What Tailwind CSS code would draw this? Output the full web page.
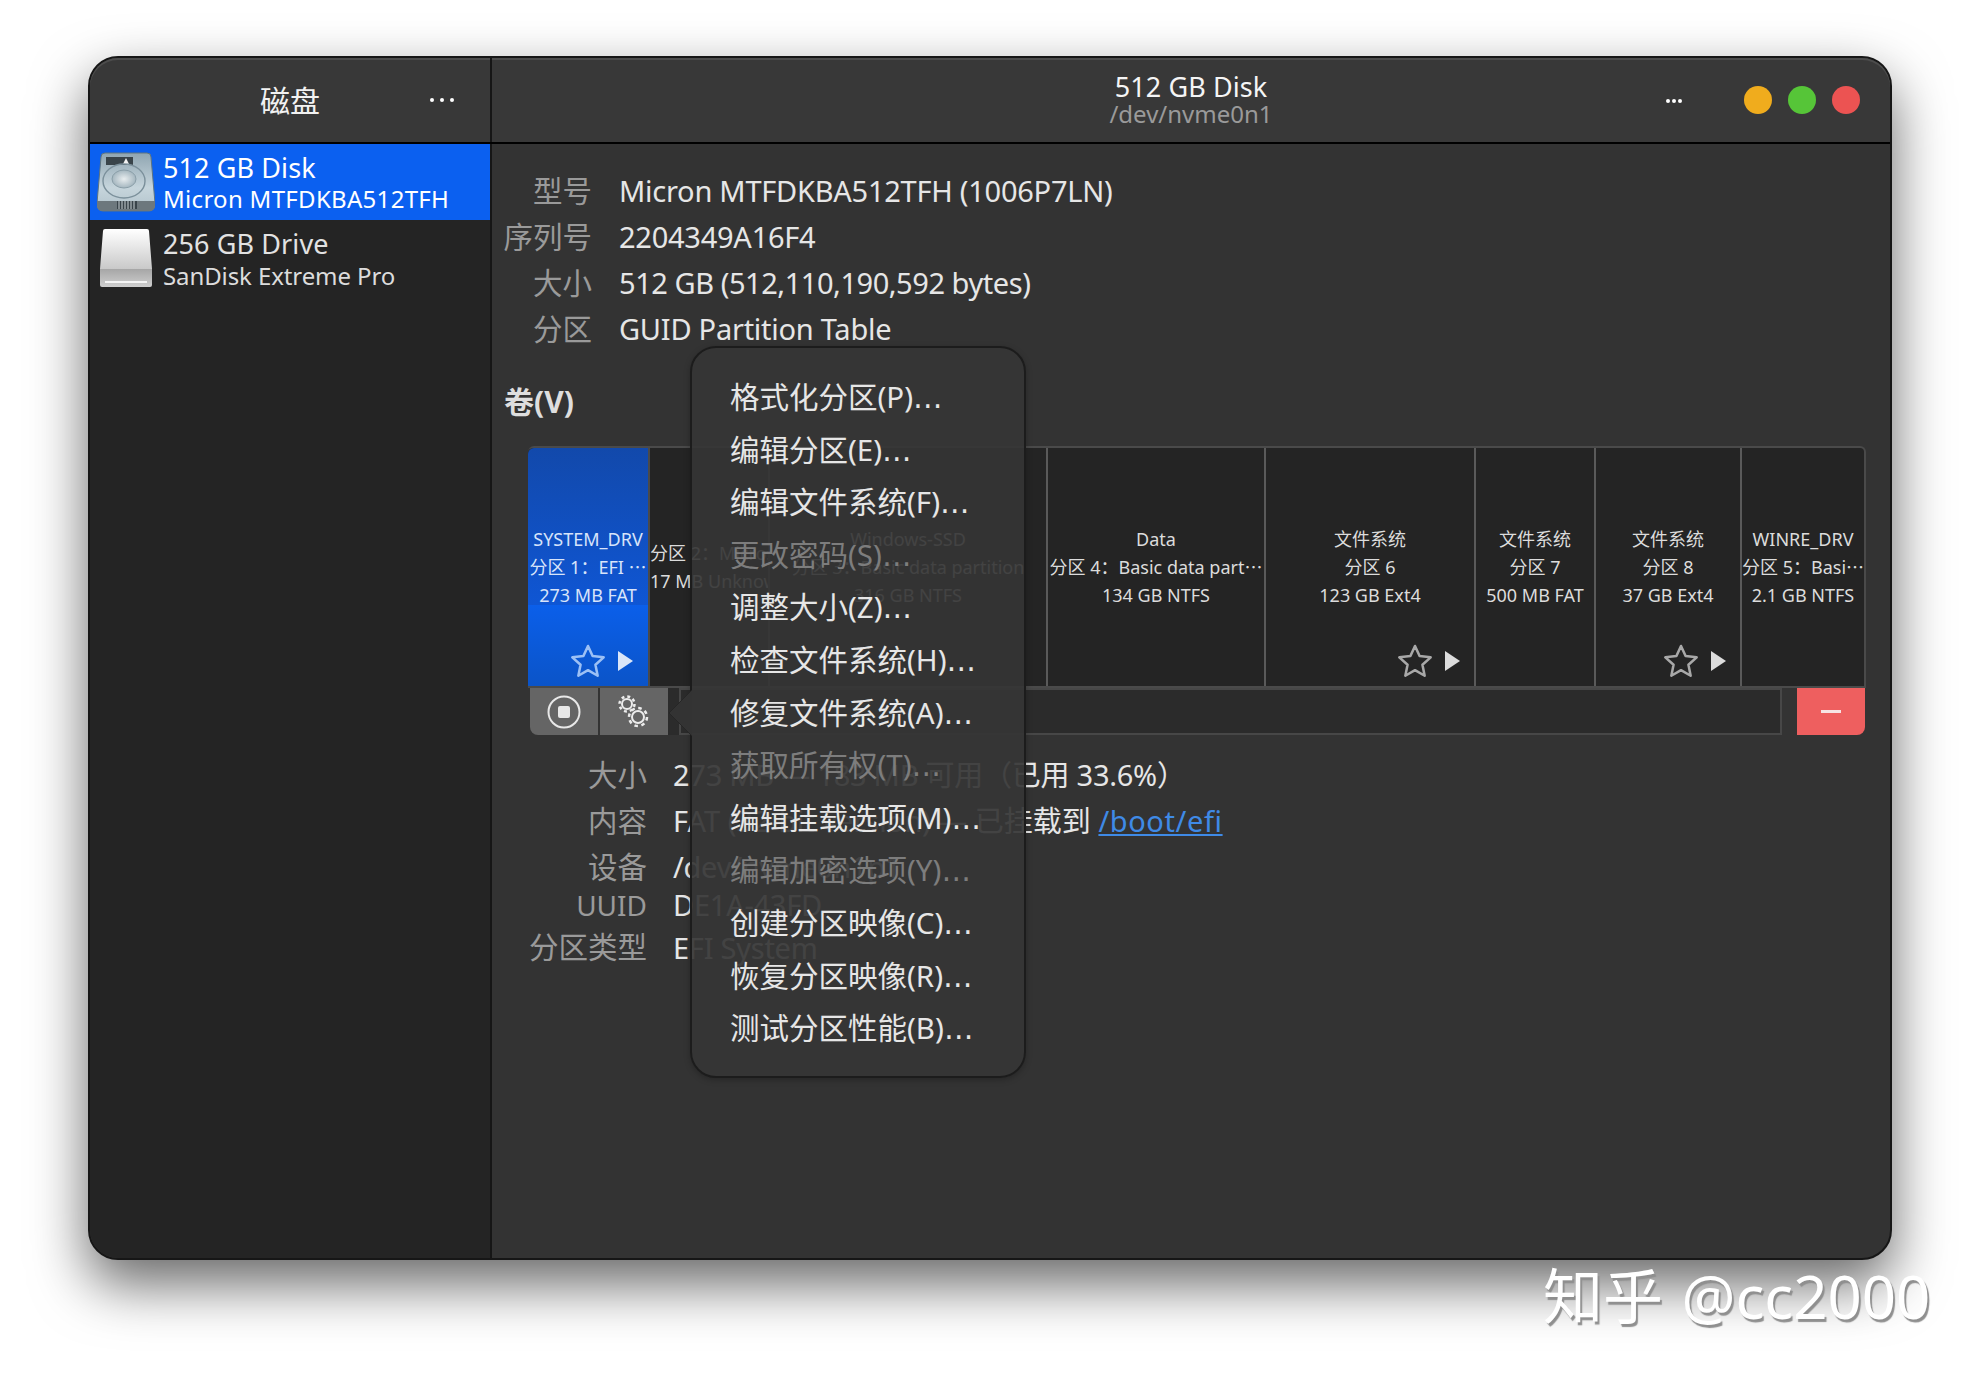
<!DOCTYPE html>
<html lang="zh-CN">
<head>
  <meta charset="UTF-8" />
  <title>磁盘</title>
  <script src="https://cdn.jsdelivr.net/npm/@tailwindcss/browser@4"></script>
</head>
<body class="relative w-[1980px] h-[1380px] overflow-hidden bg-white pt-[56px] pl-[88px] text-[#e6e6e6] [font-family:'Noto_Sans','Noto_Sans_CJK_SC',sans-serif]">

  <!-- window -->
  <div class="relative flex flex-col w-[1804px] h-[1204px] rounded-[30px] border-2 border-[#161616] bg-[#333333] shadow-[0_24px_56px_rgba(0,0,0,0.6)]">

    <!-- header -->
    <div class="flex h-[86px] shrink-0 rounded-t-[28px] border-b-2 border-black bg-[#383838] shadow-[inset_0_2px_0_#4c4c4c]">
      <div class="relative flex w-[402px] shrink-0 items-center justify-center border-r-2 border-[#161616]">
        <span class="text-[30px] text-[#f2f2f2]">磁盘</span>
        <span class="absolute left-[340px] top-[40px] flex gap-[6px]">
          <i class="block w-[4px] h-[4px] rounded-full bg-white"></i><i class="block w-[4px] h-[4px] rounded-full bg-white"></i><i class="block w-[4px] h-[4px] rounded-full bg-white"></i>
        </span>
      </div>
      <div class="relative flex-1 flex flex-col items-center pt-[10px]">
        <div class="text-[27px] leading-[37px] text-[#f5f5f5] tracking-[0.1px]">512 GB Disk</div>
        <div class="text-[24px] leading-[18px] text-[#9a9a9a]">/dev/nvme0n1</div>
        <span class="absolute left-[1174px] top-[41px] flex gap-[2px]">
          <i class="block w-[4px] h-[4px] rounded-full bg-white"></i><i class="block w-[4px] h-[4px] rounded-full bg-white"></i><i class="block w-[4px] h-[4px] rounded-full bg-white"></i>
        </span>
        <div class="absolute right-[30px] top-[28px] flex gap-[16px]">
          <i class="block w-[28px] h-[28px] rounded-full bg-[#f0ac1d]"></i>
          <i class="block w-[28px] h-[28px] rounded-full bg-[#56c538]"></i>
          <i class="block w-[28px] h-[28px] rounded-full bg-[#ec5352]"></i>
        </div>
      </div>
    </div>

    <div class="flex flex-1 min-h-0">
      <!-- sidebar -->
      <div class="w-[402px] shrink-0 rounded-bl-[28px] border-r-2 border-[#161616] bg-[#242424]">
        <div class="flex h-[76px] items-center gap-[8px] bg-[#0b60f0] pl-[7px] text-white">
          <svg width="58" height="62" viewBox="0 0 58 62" class="shrink-0">
            <defs>
              <linearGradient id="hdd" x1="0" y1="0" x2="0" y2="1"><stop offset="0" stop-color="#8fa5b1" /><stop offset="0.6" stop-color="#c6d5dc" /><stop offset="1" stop-color="#b2c3cb" /></linearGradient>
              <radialGradient id="platter"><stop offset="0" stop-color="#e8edef" /><stop offset="1" stop-color="#a4b6bf" /></radialGradient>
            </defs>
            <path d="M8 2 H50 Q54 2 54 6 L58 52 Q58 60 52 60 H6 Q0 60 0 52 L4 6 Q4 2 8 2 Z" fill="url(#hdd)" stroke="#5e7480" stroke-width="1" />
            <path d="M0 50 H58 V54 Q58 60 52 60 H6 Q0 60 0 54 Z" fill="#6d787d" />
            <rect x="9" y="6" width="27" height="8" fill="#39444a" />
            <path d="M29 7 L32 13 H26 Z" fill="#f2f2f2" />
            <ellipse cx="27" cy="30" rx="21" ry="17" fill="none" stroke="#7b909b" stroke-width="1.4" />
            <ellipse cx="27" cy="28" rx="12" ry="9" fill="url(#platter)" stroke="#8a9ea8" />
            <path d="M20 50 h20 v8 h-20 Z" fill="#39444a" />
            <path d="M22 50v8M25 50v8M28 50v8M31 50v8M34 50v8M37 50v8" stroke="#c9d1d4" stroke-width="1" />
          </svg>
          <div>
            <div class="text-[27px] leading-[34px] tracking-[0.1px]">512 GB Disk</div>
            <div class="text-[24px] leading-[28px] tracking-[0.3px]">Micron MTFDKBA512TFH</div>
          </div>
        </div>
        <div class="flex h-[76px] items-center gap-[10px] pl-[9px]">
          <svg width="54" height="60" viewBox="0 0 54 60" class="shrink-0">
            <defs>
              <linearGradient id="driveTop" x1="0" y1="0" x2="0" y2="1"><stop offset="0" stop-color="#ffffff" /><stop offset="1" stop-color="#c9c9c9" /></linearGradient>
              <linearGradient id="driveBase" x1="0" y1="0" x2="0" y2="1"><stop offset="0" stop-color="#a6a6a6" /><stop offset="1" stop-color="#cfcfcf" /></linearGradient>
            </defs>
            <path d="M6 1 H48 Q50 1 50 3 L53 41 H1 L4 3 Q4 1 6 1 Z" fill="url(#driveTop)" />
            <path d="M1 41 H53 V57 Q53 59 51 59 H3 Q1 59 1 57 Z" fill="url(#driveBase)" />
            <rect x="6" y="53" width="42" height="2" fill="#f4f4f4" />
          </svg>
          <div class="pt-[1px]">
            <div class="text-[27px] leading-[34px] tracking-[0.1px] text-[#e2e2e2]">256 GB Drive</div>
            <div class="text-[24px] leading-[30px] tracking-[-0.1px] text-[#dcdcdc]">SanDisk Extreme Pro</div>
          </div>
        </div>
      </div>

      <!-- main -->
      <div class="flex-1 min-w-0 pt-[24px] text-[29px]">
        <div class="grid grid-cols-[100px_1fr] gap-x-[27px] auto-rows-[46px] items-center">
          <div class="text-right text-[29.5px] text-[#9a9a9a]">型号</div><div class="tracking-[-0.25px]">Micron MTFDKBA512TFH (1006P7LN)</div>
          <div class="text-right text-[29.5px] text-[#9a9a9a] whitespace-nowrap">序列号</div><div class="tracking-[-0.25px]">2204349A16F4</div>
          <div class="text-right text-[29.5px] text-[#9a9a9a]">大小</div><div class="tracking-[-0.45px]">512 GB (512,110,190,592 bytes)</div>
          <div class="text-right text-[29.5px] text-[#9a9a9a]">分区</div><div class="tracking-[-0.25px]">GUID Partition Table</div>
        </div>

        <div class="ml-[12px] mt-[25px] h-[48px] flex items-center text-[30px] font-bold text-[#dedede]">卷(V)</div>

        <!-- partition map -->
        <div class="ml-[36px] mt-[21px] w-[1338px] flex h-[240px] rounded-t-[6px] border-t-2 border-r-2 border-[#4a4a4a] bg-[#242424] text-[18px] leading-[28px] text-[#dcdcdc] text-center">
          <div class="relative flex w-[120px] shrink-0 items-center justify-center overflow-hidden whitespace-nowrap rounded-tl-[6px] bg-[linear-gradient(180deg,#1249ab_0%,#0f56d4_66%,#0b5fea_66%,#0b54c8_100%)] text-[#d8e4fa]">
            <div>SYSTEM_DRV<br />分区 1：EFI ⋯<br />273 MB FAT</div>
            <div class="absolute right-[14px] bottom-[6px] flex items-center gap-[10px]">
              <svg width="38" height="38" viewBox="0 0 24 24" fill="none" stroke="#9cc0f5" stroke-width="1.6" stroke-linejoin="round"><path d="M12 2.5 L14.9 8.9 L21.9 9.7 L16.7 14.4 L18.1 21.3 L12 17.8 L5.9 21.3 L7.3 14.4 L2.1 9.7 L9.1 8.9 Z" /></svg>
              <svg width="17" height="22" viewBox="0 0 17 22"><path d="M1 1 L16 11 L1 21 Z" fill="#dbe6f8" /></svg>
            </div>
          </div>
          <div class="flex w-[120px] shrink-0 items-center overflow-hidden whitespace-nowrap border-l-2 border-[#4a4a4a] text-left">
            <div>分区 2：Microsoft<br />17 MB Unknown</div>
          </div>
          <div class="flex w-[278px] shrink-0 items-center justify-center overflow-hidden whitespace-nowrap border-l-2 border-[#4a4a4a]">
            <div>Windows-SSD<br />分区 3：Basic data partition<br />316 GB NTFS</div>
          </div>
          <div class="flex w-[218px] shrink-0 items-center justify-center overflow-hidden whitespace-nowrap border-l-2 border-[#5a5a5a]">
            <div>Data<br />分区 4：Basic data part⋯<br />134 GB NTFS</div>
          </div>
          <div class="relative flex w-[210px] shrink-0 items-center justify-center whitespace-nowrap border-l-2 border-[#5a5a5a]">
            <div>文件系统<br />分区 6<br />123 GB Ext4</div>
            <div class="absolute right-[13px] bottom-[6px] flex items-center gap-[10px]">
              <svg width="38" height="38" viewBox="0 0 24 24" fill="none" stroke="#a8a8a8" stroke-width="1.6" stroke-linejoin="round"><path d="M12 2.5 L14.9 8.9 L21.9 9.7 L16.7 14.4 L18.1 21.3 L12 17.8 L5.9 21.3 L7.3 14.4 L2.1 9.7 L9.1 8.9 Z" /></svg>
              <svg width="17" height="22" viewBox="0 0 17 22"><path d="M1 1 L16 11 L1 21 Z" fill="#dcdcdc" /></svg>
            </div>
          </div>
          <div class="flex w-[120px] shrink-0 items-center justify-center overflow-hidden whitespace-nowrap border-l-2 border-[#5a5a5a]">
            <div>文件系统<br />分区 7<br />500 MB FAT</div>
          </div>
          <div class="relative flex w-[146px] shrink-0 items-center justify-center whitespace-nowrap border-l-2 border-[#5a5a5a]">
            <div>文件系统<br />分区 8<br />37 GB Ext4</div>
            <div class="absolute right-[13px] bottom-[6px] flex items-center gap-[10px]">
              <svg width="38" height="38" viewBox="0 0 24 24" fill="none" stroke="#a8a8a8" stroke-width="1.6" stroke-linejoin="round"><path d="M12 2.5 L14.9 8.9 L21.9 9.7 L16.7 14.4 L18.1 21.3 L12 17.8 L5.9 21.3 L7.3 14.4 L2.1 9.7 L9.1 8.9 Z" /></svg>
              <svg width="17" height="22" viewBox="0 0 17 22"><path d="M1 1 L16 11 L1 21 Z" fill="#dcdcdc" /></svg>
            </div>
          </div>
          <div class="flex min-w-0 flex-1 items-center justify-center overflow-hidden whitespace-nowrap border-l-2 border-[#5a5a5a]">
            <div>WINRE_DRV<br />分区 5：Basi⋯<br />2.1 GB NTFS</div>
          </div>
        </div>

        <!-- volume toolbar -->
        <div class="ml-[36px] w-[1338px] flex h-[49px] border-t-2 border-[#4a4a4a]">
          <div class="ml-[2px] flex h-[47px] w-[68px] items-center justify-center rounded-bl-[8px] bg-[#656565]">
            <svg width="34" height="34" viewBox="0 0 34 34"><circle cx="17" cy="17" r="15.5" fill="none" stroke="#e8e8e8" stroke-width="2" /><rect x="11" y="11" width="12" height="12" rx="2" fill="#e8e8e8" /></svg>
          </div>
          <div class="ml-[2px] flex h-[47px] w-[68px] items-center justify-center bg-[#656565]">
            <svg width="32" height="34" viewBox="0 0 32 34" fill="none" stroke="#ececec">
              <circle cx="9" cy="9" r="5" stroke-width="2" />
              <circle cx="9" cy="9" r="7.5" stroke-width="2.5" stroke-dasharray="2.95 2.95" />
              <circle cx="20" cy="22" r="6" stroke-width="2" />
              <circle cx="20" cy="22" r="9" stroke-width="2.5" stroke-dasharray="3.53 3.53" />
            </svg>
          </div>
          <div class="w-[11px] h-[47px] bg-[#2b2b2b]"></div>
          <div class="h-[47px] w-[1103px] border-y-2 border-x-2 border-[#474747] bg-[#2b2b2b]"></div>
          <div class="ml-[15px] flex h-[47px] w-[68px] items-center justify-center rounded-br-[8px] bg-[#ee5f5f]">
            <i class="block h-[3px] w-[20px] bg-[#f7e4e4]"></i>
          </div>
        </div>

        <!-- volume details -->
        <div class="mt-[17px] grid grid-cols-[155px_1fr] gap-x-[26px] grid-rows-[46px_46px_46px_29px_57px] items-center">
          <div class="text-right text-[29.5px] text-[#9a9a9a]">大小</div><div class="tracking-[-0.25px]">273 MB — 183 MB 可用（已用 33.6%）</div>
          <div class="text-right text-[29.5px] text-[#9a9a9a]">内容</div><div>FAT (32-bit version) — 已挂载到 <span class="tracking-[0.6px] text-[#3f8ae6] underline">/boot/efi</span></div>
          <div class="text-right text-[29.5px] text-[#9a9a9a]">设备</div><div class="tracking-[-0.25px]">/dev/nvme0n1p1</div>
          <div class="text-right text-[28px] text-[#9a9a9a]">UUID</div><div class="tracking-[-0.25px]">DE1A-43FD</div>
          <div class="text-right text-[29.5px] text-[#9a9a9a] whitespace-nowrap">分区类型</div><div class="tracking-[-0.25px]">EFI System</div>
        </div>
      </div>
    </div>

    <!-- popover menu -->
    <div class="absolute left-[600px] top-[288px] w-[336px] h-[732px] rounded-[26px] border-2 border-[#1c1c1c] bg-[#353535]/92 pt-[23px] pl-[38px] text-[29.5px] leading-[52.6px] whitespace-nowrap text-[#e6e6e6] shadow-[0_2px_6px_rgba(0,0,0,0.25)]">
      <div>格式化分区(P)<span class="leading-[0] [font-family:'DejaVu_Sans']">…</span></div>
      <div>编辑分区(E)<span class="leading-[0] [font-family:'DejaVu_Sans']">…</span></div>
      <div>编辑文件系统(F)<span class="leading-[0] [font-family:'DejaVu_Sans']">…</span></div>
      <div class="text-[#7d7d7d]">更改密码(S)<span class="leading-[0] [font-family:'DejaVu_Sans']">…</span></div>
      <div>调整大小(Z)<span class="leading-[0] [font-family:'DejaVu_Sans']">…</span></div>
      <div>检查文件系统(H)<span class="leading-[0] [font-family:'DejaVu_Sans']">…</span></div>
      <div>修复文件系统(A)<span class="leading-[0] [font-family:'DejaVu_Sans']">…</span></div>
      <div class="text-[#7d7d7d]">获取所有权(T)<span class="leading-[0] [font-family:'DejaVu_Sans']">…</span></div>
      <div>编辑挂载选项(M)<span class="leading-[0] [font-family:'DejaVu_Sans']">…</span></div>
      <div class="text-[#7d7d7d]">编辑加密选项(Y)<span class="leading-[0] [font-family:'DejaVu_Sans']">…</span></div>
      <div>创建分区映像(C)<span class="leading-[0] [font-family:'DejaVu_Sans']">…</span></div>
      <div>恢复分区映像(R)<span class="leading-[0] [font-family:'DejaVu_Sans']">…</span></div>
      <div>测试分区性能(B)<span class="leading-[0] [font-family:'DejaVu_Sans']">…</span></div>
      <svg width="24" height="46" viewBox="0 0 24 46" class="absolute left-[-24px] top-[342px]"><path d="M24 0 L1 23 L24 46" fill="#333333" stroke="#262626" stroke-width="1" /></svg>
    </div>
  </div>

  <!-- watermark -->
  <div class="absolute left-[1543px] top-[1258px] text-[60px] leading-[76px] [word-spacing:3px] whitespace-nowrap text-white [text-shadow:2px_3px_1px_#8f8f8f]">知乎 @cc2000</div>
</body>
</html>
